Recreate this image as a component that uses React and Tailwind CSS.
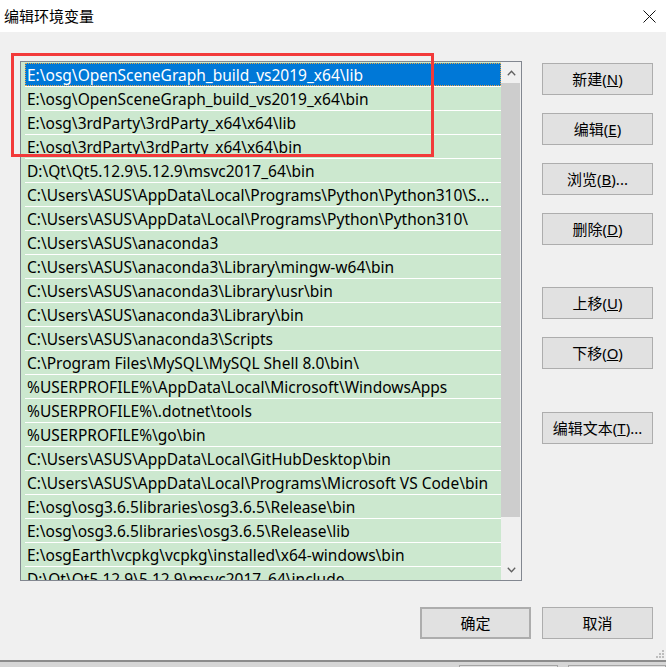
import React from "react";

const rows = [
  "E:\\osg\\OpenSceneGraph_build_vs2019_x64\\lib",
  "E:\\osg\\OpenSceneGraph_build_vs2019_x64\\bin",
  "E:\\osg\\3rdParty\\3rdParty_x64\\x64\\lib",
  "E:\\osg\\3rdParty\\3rdParty_x64\\x64\\bin",
  "D:\\Qt\\Qt5.12.9\\5.12.9\\msvc2017_64\\bin",
  "C:\\Users\\ASUS\\AppData\\Local\\Programs\\Python\\Python310\\S...",
  "C:\\Users\\ASUS\\AppData\\Local\\Programs\\Python\\Python310\\",
  "C:\\Users\\ASUS\\anaconda3",
  "C:\\Users\\ASUS\\anaconda3\\Library\\mingw-w64\\bin",
  "C:\\Users\\ASUS\\anaconda3\\Library\\usr\\bin",
  "C:\\Users\\ASUS\\anaconda3\\Library\\bin",
  "C:\\Users\\ASUS\\anaconda3\\Scripts",
  "C:\\Program Files\\MySQL\\MySQL Shell 8.0\\bin\\",
  "%USERPROFILE%\\AppData\\Local\\Microsoft\\WindowsApps",
  "%USERPROFILE%\\.dotnet\\tools",
  "%USERPROFILE%\\go\\bin",
  "C:\\Users\\ASUS\\AppData\\Local\\GitHubDesktop\\bin",
  "C:\\Users\\ASUS\\AppData\\Local\\Programs\\Microsoft VS Code\\bin",
  "E:\\osg\\osg3.6.5libraries\\osg3.6.5\\Release\\bin",
  "E:\\osg\\osg3.6.5libraries\\osg3.6.5\\Release\\lib",
  "E:\\osgEarth\\vcpkg\\vcpkg\\installed\\x64-windows\\bin",
  "D:\\Qt\\Qt5.12.9\\5.12.9\\msvc2017_64\\include",
];

function Btn({ children, className = "" }) {
  return (
    <div
      className={
        "w-[111px] h-[32px] shrink-0 bg-[#e1e1e1] border border-[#adadad] flex items-center justify-center text-[15px] text-black " +
        className
      }
    >
      {children}
    </div>
  );
}

function Chevron({ up }) {
  return (
    <svg width="9" height="6" viewBox="0 0 9 6">
      <path
        d={up ? "M0.8 5.2 L4.5 1.2 L8.2 5.2" : "M0.8 0.8 L4.5 4.8 L8.2 0.8"}
        fill="none"
        stroke="#606060"
        strokeWidth="1.3"
      />
    </svg>
  );
}

export default function App() {
  return (
    <div
      className="relative w-[666px] h-[667px] bg-[#f0f0f0] flex flex-col overflow-hidden"
      style={{ fontFamily: '"Noto Sans", "Noto Sans CJK SC", sans-serif' }}
    >
      {/* title bar */}
      <div className="h-[32px] bg-white flex items-center justify-between pl-[4px] pr-[10px] shrink-0">
        <span className="text-[15px] text-black" style={{ fontFamily: '"Noto Sans CJK SC", sans-serif' }}>
          编辑环境变量
        </span>
        <svg width="13" height="13" viewBox="0 0 13 13">
          <path d="M0.5 0.5 L12.5 12.5 M12.5 0.5 L0.5 12.5" stroke="#111" strokeWidth="1" />
        </svg>
      </div>

      <div className="flex-1 flex flex-col pl-[20px] pt-[29px]">
        <div className="flex gap-[20px]">
          {/* list */}
          <div className="w-[502px] h-[520px] border border-[#828790] bg-[#cce8cf] flex shrink-0">
            <div className="flex-1 min-w-0 pl-[4px] pt-[1px] overflow-hidden flex flex-col">
              {rows.map((r, i) => (
                <div
                  key={i}
                  className={
                    "relative h-[24px] shrink-0 border-b border-white pl-[2px] whitespace-nowrap overflow-hidden text-[15.5px] leading-[24px] " +
                    (i === 0 ? "bg-[#0078d7] text-white" : "text-black")
                  }
                >
                  {r}
                  {i === 0 && (
                    <div className="absolute inset-0 border border-dotted border-[#e8a547] pointer-events-none" />
                  )}
                </div>
              ))}
            </div>
            {/* scrollbar */}
            <div className="w-[20px] shrink-0 bg-[#f0f0f0] flex flex-col">
              <div className="h-[21px] flex items-center justify-center">
                <Chevron up />
              </div>
              <div className="flex-1 flex flex-col">
                <div className="h-[434px] bg-[#cdcdcd] mr-[1px]" />
              </div>
              <div className="h-[21px] flex items-center justify-center">
                <Chevron />
              </div>
            </div>
          </div>

          {/* right buttons */}
          <div className="flex flex-col pt-[2px]">
            <Btn>新建(<u>N</u>)</Btn>
            <Btn className="mt-[18px]">编辑(<u>E</u>)</Btn>
            <Btn className="mt-[18px]">浏览(<u>B</u>)...</Btn>
            <Btn className="mt-[18px]">删除(<u>D</u>)</Btn>
            <Btn className="mt-[42px]">上移(<u>U</u>)</Btn>
            <Btn className="mt-[18px]">下移(<u>O</u>)</Btn>
            <Btn className="mt-[43px]">编辑文本(<u>T</u>)...</Btn>
          </div>
        </div>

        {/* bottom buttons */}
        <div className="flex gap-[11px] mt-[26px] pl-[400px]">
          <Btn className="border-2 border-[#0078d7]">确定</Btn>
          <Btn>取消</Btn>
        </div>
      </div>

      {/* bottom edge / window behind */}
      <div className="h-[7px] shrink-0 border-t-2 border-[#8c8c8c] bg-[#d6d6d6] flex pl-[459px] gap-[10px] pt-[3px]">
        <div className="w-[111px] h-[10px] border border-[#a4a4a4] bg-[#e3e3e3]" />
        <div className="w-[111px] h-[10px] border border-[#a4a4a4] bg-[#e3e3e3]" />
      </div>

      {/* resize grip */}
      <svg className="absolute right-[1px] bottom-[8px]" width="10" height="10" viewBox="0 0 10 10">
        <rect x="7" y="1" width="2" height="2" fill="#bdbdbd" />
        <rect x="4" y="4" width="2" height="2" fill="#bdbdbd" />
        <rect x="7" y="4" width="2" height="2" fill="#bdbdbd" />
        <rect x="1" y="7" width="2" height="2" fill="#bdbdbd" />
        <rect x="4" y="7" width="2" height="2" fill="#bdbdbd" />
        <rect x="7" y="7" width="2" height="2" fill="#bdbdbd" />
      </svg>

      {/* red annotation box */}
      <div className="absolute left-[11px] top-[53px] w-[423px] h-[104px] border-[3px] border-[#f23a3a] pointer-events-none" />
    </div>
  );
}
